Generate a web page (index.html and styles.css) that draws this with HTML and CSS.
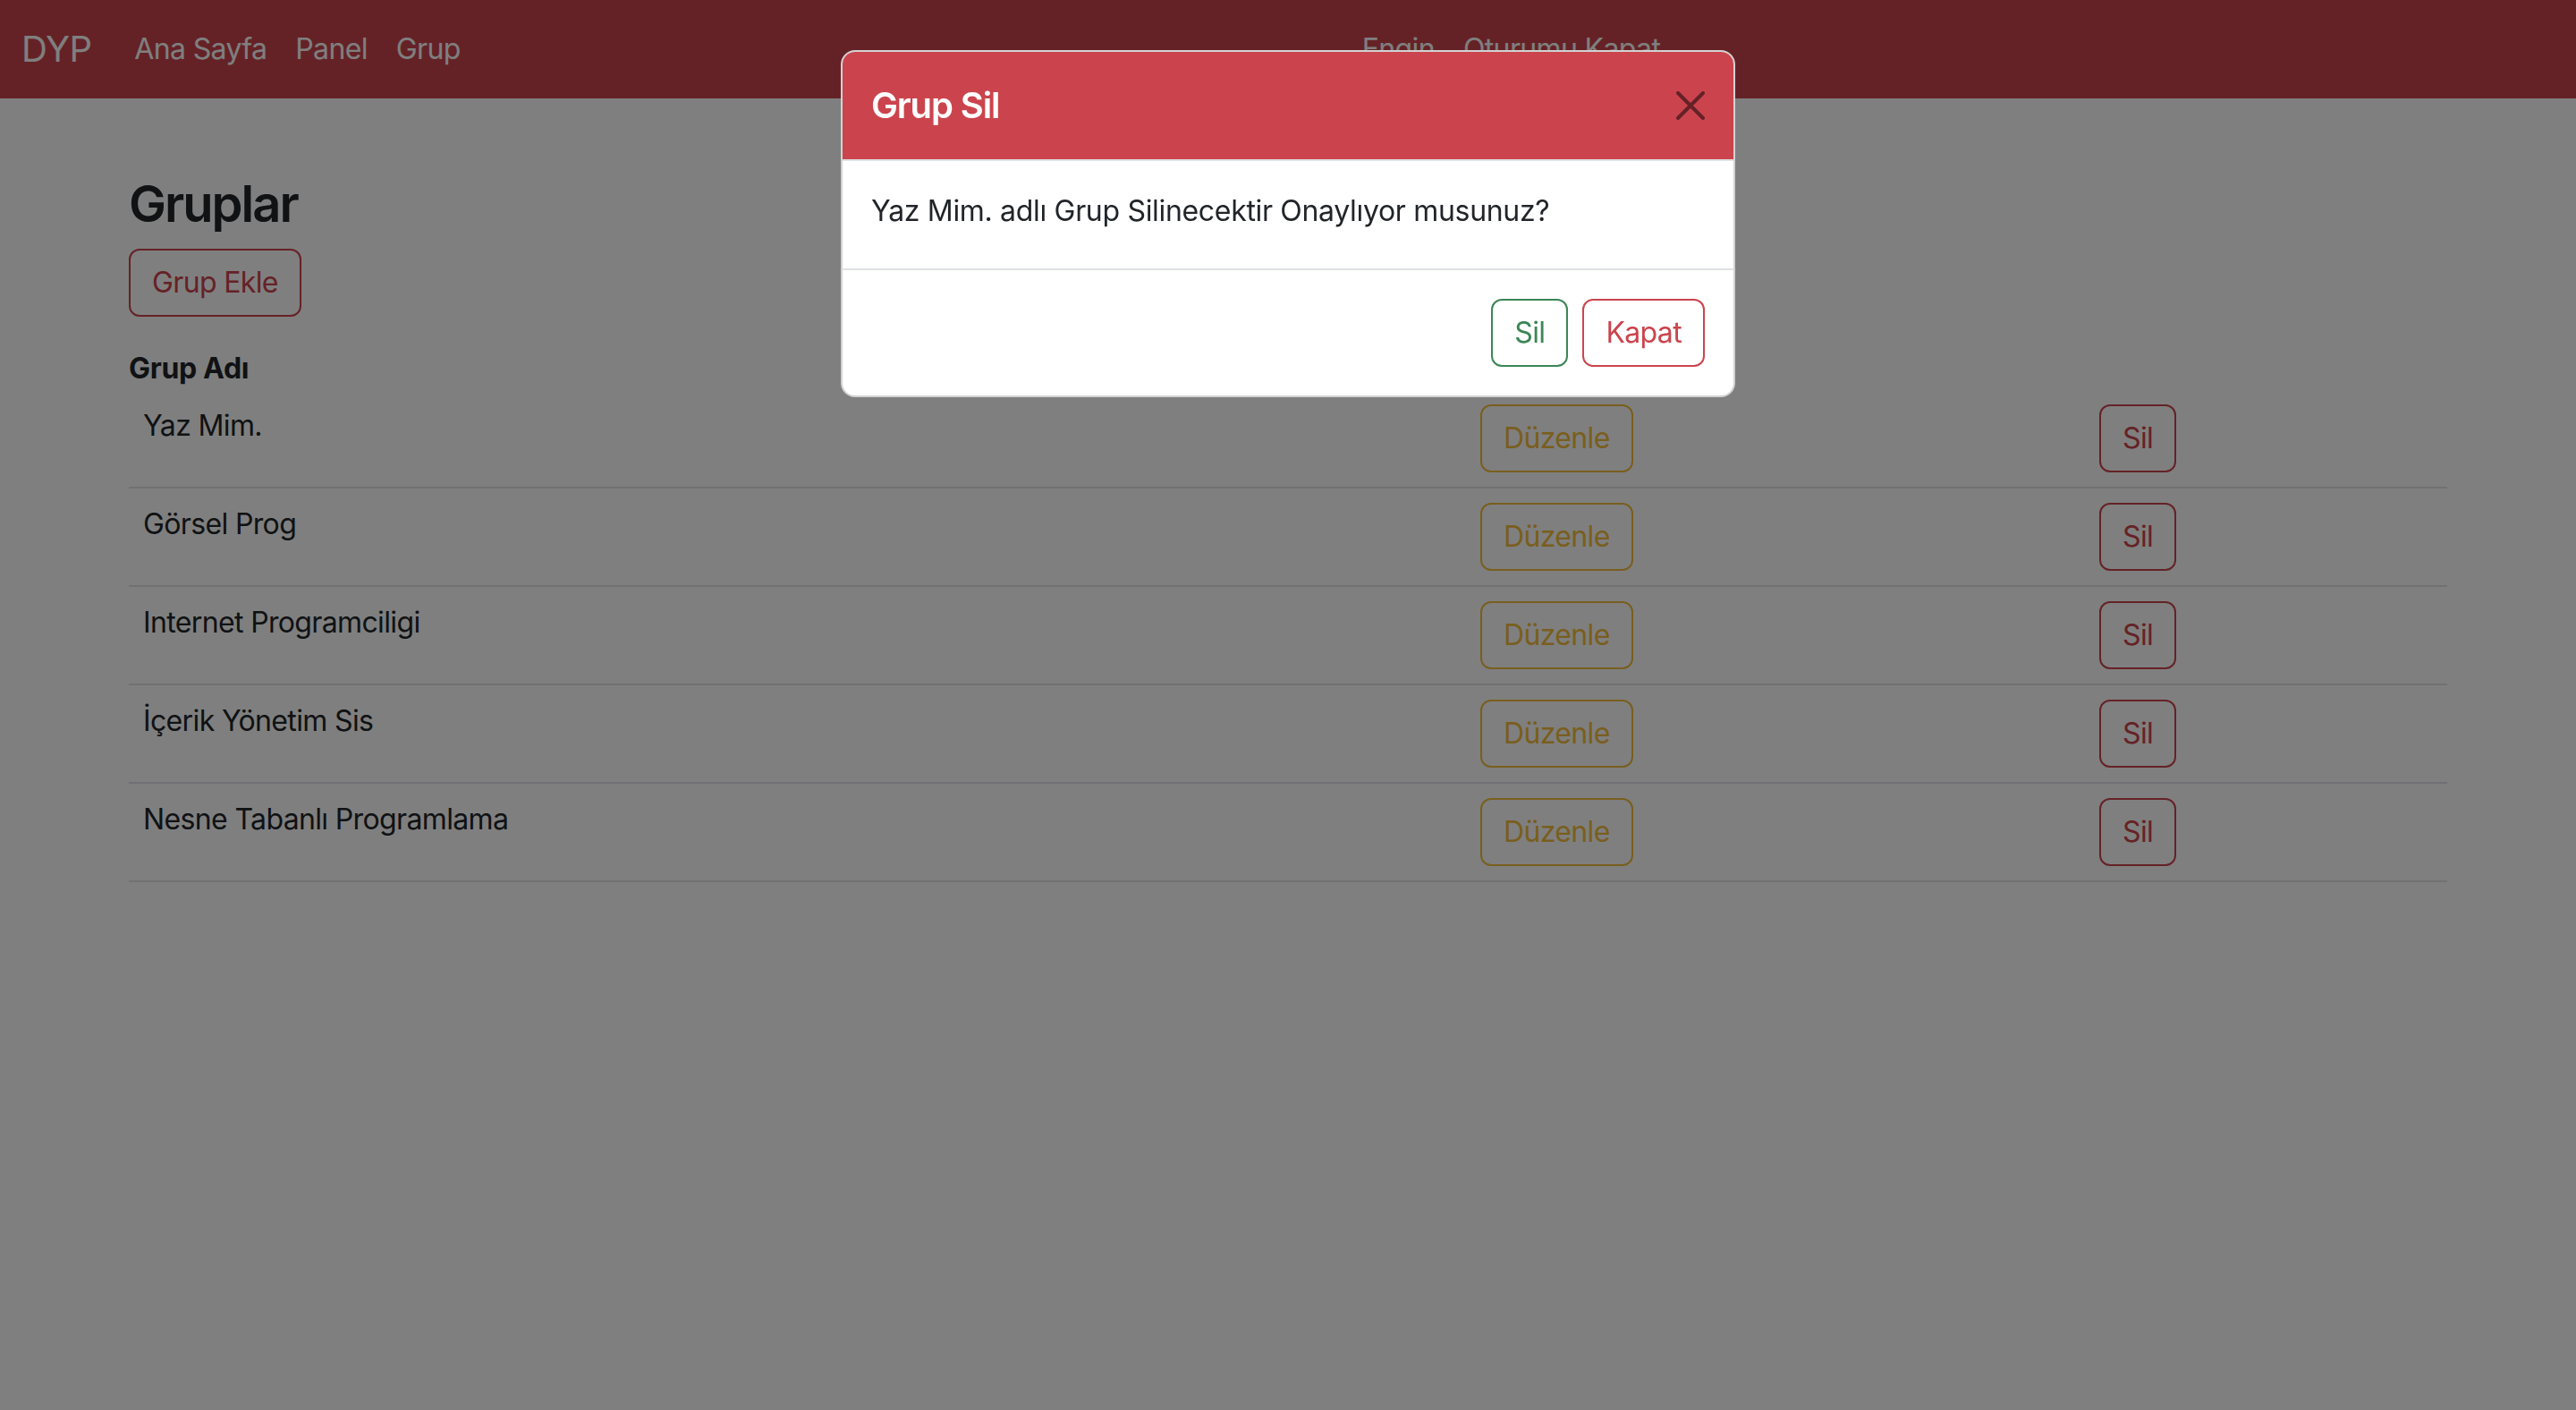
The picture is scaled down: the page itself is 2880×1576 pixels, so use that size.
FILE: index.html
```html
<!DOCTYPE html>
<html lang="tr">
<head>
	<meta charset="UTF-8">
	<title>Gruplar</title>
	<link rel="stylesheet" href="styles.css">
</head>
<body>
	<nav class="navbar">
		<a class="brand">DYP</a>
		<ul class="nav">
			<li><a>Ana Sayfa</a></li>
			<li><a>Panel</a></li>
			<li><a>Grup</a></li>
		</ul>
		<ul class="nav nav-user">
			<li><a>Engin</a></li>
			<li><a>Oturumu Kapat</a></li>
		</ul>
	</nav>

	<div class="container">
		<h3 class="title">Gruplar</h3>
		<a class="btn btn-danger">Grup Ekle</a>
		<div class="list-head">Grup Adı</div>
		<table class="groups">
			<tr>
				<td class="name">Yaz Mim.</td>
				<td class="edit"><a class="btn btn-warning">Düzenle</a></td>
				<td class="del"><a class="btn btn-danger">Sil</a></td>
			</tr>
			<tr>
				<td class="name">Görsel Prog</td>
				<td class="edit"><a class="btn btn-warning">Düzenle</a></td>
				<td class="del"><a class="btn btn-danger">Sil</a></td>
			</tr>
			<tr>
				<td class="name">Internet Programciligi</td>
				<td class="edit"><a class="btn btn-warning">Düzenle</a></td>
				<td class="del"><a class="btn btn-danger">Sil</a></td>
			</tr>
			<tr>
				<td class="name">İçerik Yönetim Sis</td>
				<td class="edit"><a class="btn btn-warning">Düzenle</a></td>
				<td class="del"><a class="btn btn-danger">Sil</a></td>
			</tr>
			<tr>
				<td class="name">Nesne Tabanlı Programlama</td>
				<td class="edit"><a class="btn btn-warning">Düzenle</a></td>
				<td class="del"><a class="btn btn-danger">Sil</a></td>
			</tr>
		</table>
	</div>

	<!-- silme onayı -->
	<div class="backdrop"></div>
	<div class="modal">
		<div class="modal-dialog">
			<div class="modal-header">
				<h5 class="modal-title">Grup Sil</h5>
				<a class="btn-close">
					<svg viewBox="0 0 16 16" width="32" height="32"><path d="M1 1L15 15M15 1L1 15" stroke="#000" stroke-width="2" stroke-linecap="round" fill="none"/></svg>
				</a>
			</div>
			<div class="modal-body">Yaz Mim. adlı Grup Silinecektir Onaylıyor musunuz?</div>
			<div class="modal-footer">
				<a class="btn btn-success">Sil</a>
				<a class="btn btn-danger">Kapat</a>
			</div>
		</div>
	</div>
</body>
</html>
```

FILE: styles.css
```css
*{
	margin: 0;
	padding: 0;
	box-sizing: border-box;
}
body{
	font-family: Inter, "Noto Sans", sans-serif;
	font-size: 32px;
	line-height: 48px;
	letter-spacing: -0.02em;
	color: #212529;
	background-color: #fff;
}
a{
	cursor: pointer;
}
.navbar{
	display: flex;
	align-items: center;
	height: 110px;
	padding: 0 24px;
	background-color: #cb444d;
}
.brand{
	font-size: 40px;
	line-height: 60px;
	color: #fff;
	margin-right: 32px;
}
.nav{
	display: flex;
	list-style: none;
}
.nav a{
	display: block;
	padding: 16px;
	color: #fff;
}
.nav-user{
	margin-left: 976px;
}
.container{
	width: 2592px;
	margin: 0 auto;
	padding-top: 85px;
}
.title{
	font-size: 56px;
	font-weight: 600;
	line-height: 67px;
	letter-spacing: -0.035em;
	margin-bottom: 16px;
}
.btn{
	display: inline-block;
	padding: 12px 24px;
	border: 2px solid;
	border-radius: 12px;
	font-size: 32px;
	line-height: 48px;
	background: transparent;
}
.btn-danger{
	color: #cb444d;
	border-color: #cb444d;
}
.btn-warning{
	color: #f2bd3c;
	border-color: #f2bd3c;
}
.btn-success{
	color: #3b8656;
	border-color: #3b8656;
}
.list-head{
	font-weight: 700;
	letter-spacing: -0.01em;
	margin-top: 34px;
}
.groups{
	width: 100%;
	border-collapse: collapse;
}
.groups td{
	padding: 16px;
	vertical-align: top;
	border-bottom: 2px solid #dee2e6;
}
.groups .name{
	width: 1495px;
}
.groups .edit{
	width: 692px;
}
.groups .del{
	width: 405px;
}
.backdrop{
	position: fixed;
	top: 0;
	left: 0;
	right: 0;
	bottom: 0;
	background-color: rgba(0, 0, 0, .5);
}
.modal{
	position: fixed;
	top: 0;
	left: 0;
	right: 0;
	bottom: 0;
}
.modal-dialog{
	width: 1000px;
	margin: 56px auto 0;
	background-color: #fff;
	border: 2px solid rgba(0, 0, 0, .175);
	border-radius: 16px;
	overflow: hidden;
}
.modal-header{
	display: flex;
	align-items: center;
	justify-content: space-between;
	padding: 32px;
	background-color: #cb444d;
	border-bottom: 2px solid #dee2e6;
}
.modal-title{
	font-size: 40px;
	font-weight: 600;
	line-height: 56px;
	letter-spacing: -0.028em;
	color: #fff;
}
.btn-close{
	display: flex;
	padding: 16px;
	margin: -16px -16px -16px auto;
	opacity: .5;
}
.modal-body{
	padding: 32px 32px 40px;
	letter-spacing: -0.01em;
}
.modal-footer{
	display: flex;
	justify-content: flex-end;
	gap: 16px;
	padding: 32px;
	border-top: 2px solid #dee2e6;
}
```
